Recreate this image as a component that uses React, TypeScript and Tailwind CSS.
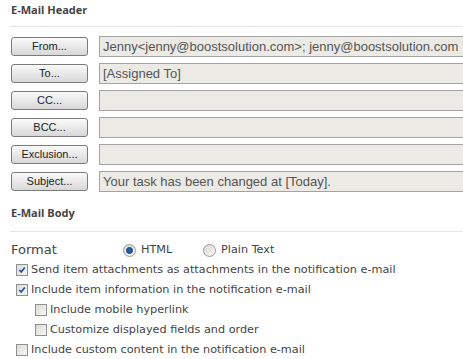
import React from "react";

const rows = [
  { label: "From...", value: "Jenny<jenny@boostsolution.com>; jenny@boostsolution.com" },
  { label: "To...", value: "[Assigned To]" },
  { label: "CC...", value: "" },
  { label: "BCC...", value: "" },
  { label: "Exclusion...", value: "" },
  { label: "Subject...", value: "Your task has been changed at [Today]." },
];

function CheckBox({ checked }: { checked?: boolean }) {
  return (
    <span className="w-[12px] h-[12px] shrink-0 border border-[#8f8f8f] bg-gradient-to-br from-[#dcdcd6] to-[#f6f6f3] flex items-center justify-center">
      {checked && (
        <svg width="8" height="8" viewBox="0 0 9 9">
          <path d="M1.5 4.5 L3.6 6.8 L7.6 1.6" fill="none" stroke="#2150a8" strokeWidth="1.9" />
        </svg>
      )}
    </span>
  );
}

function Radio({ checked }: { checked?: boolean }) {
  return (
    <span className="w-[13px] h-[13px] rounded-full border border-[#9a9a9a] bg-gradient-to-br from-[#d8d8d4] to-[#f8f8f6] flex items-center justify-center">
      {checked && <span className="w-[7px] h-[7px] rounded-full bg-[#1f5fa8] border border-[#13407a]" />}
    </span>
  );
}

function Option({ checked, indent, children }: { checked?: boolean; indent?: boolean; children: React.ReactNode }) {
  return (
    <div className={`flex items-center h-[20px] gap-[3px] ${indent ? "pl-[24px]" : "pl-[5px]"}`}>
      <CheckBox checked={checked} />
      <span>{children}</span>
    </div>
  );
}

export default function App() {
  return (
    <div className="w-[463px] h-[359px] overflow-hidden bg-white">
      <div className="pl-[11px] pt-[1px]">
        <div className="h-[18px] flex items-center text-[11px] font-bold text-[#444] font-['Open_Sans',sans-serif]">E-Mail Header</div>
        <div className="h-px bg-[#e4e4e4] mt-[7px] -ml-px" />
        <div className="mt-[9px] flex flex-col gap-[6px]">
          {rows.map((r) => (
            <div key={r.label} className="flex items-center h-[21px]">
              <button className="w-[77px] shrink-0 h-[19px] border border-[#7b7b7b] rounded-[3px] bg-gradient-to-b from-[#fafafa] to-[#d8d8d8] text-[11px] text-[#222] font-['Liberation_Sans',Arial,sans-serif] leading-none">
                {r.label}
              </button>
              <div className="ml-[11px] w-[380px] shrink-0 h-[21px] border border-[#a3a3a3] bg-[#ebeae5] pl-[3px] flex items-center text-[13px] text-[#555] font-['Liberation_Sans',Arial,sans-serif] whitespace-nowrap overflow-hidden">
                {r.value}
              </div>
            </div>
          ))}
        </div>
        <div className="mt-[12px] h-[18px] flex items-center text-[11px] font-bold text-[#444] font-['Open_Sans',sans-serif]">E-Mail Body</div>
        <div className="h-px bg-[#e4e4e4] mt-[9px] -ml-px" />
        <div className="text-[11.25px] text-[#444] font-['DejaVu_Sans',Verdana,sans-serif]">
          <div className="flex items-center h-[20px] mt-[8px]">
            <span className="w-[112px] text-[13px]">Format</span>
            <span className="flex items-center gap-[5px] w-[80px]">
              <Radio checked />
              <span>HTML</span>
            </span>
            <span className="flex items-center gap-[5px]">
              <Radio />
              <span>Plain Text</span>
            </span>
          </div>
          <Option checked>Send item attachments as attachments in the notification e-mail</Option>
          <Option checked>Include item information in the notification e-mail</Option>
          <Option indent>Include mobile hyperlink</Option>
          <Option indent>Customize displayed fields and order</Option>
          <Option>Include custom content in the notification e-mail</Option>
        </div>
      </div>
    </div>
  );
}
